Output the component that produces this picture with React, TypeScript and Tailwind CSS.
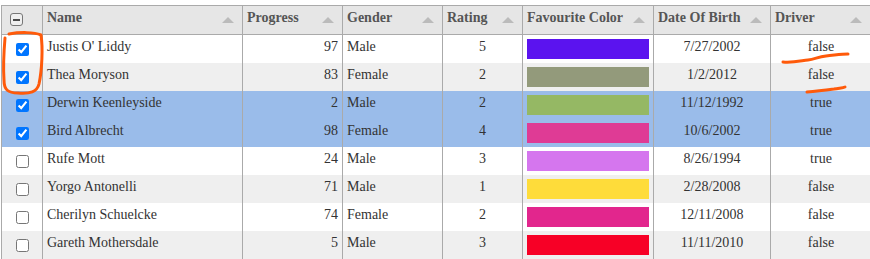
type Row = {
  name: string;
  progress: number;
  gender: string;
  rating: number;
  color: string;
  dob: string;
  driver: boolean;
  selected?: boolean;
};

const rows: Row[] = [
  { name: "Justis O' Liddy", progress: 97, gender: "Male", rating: 5, color: "#5b13ef", dob: "7/27/2002", driver: false, selected: true },
  { name: "Thea Moryson", progress: 83, gender: "Female", rating: 2, color: "#939a7b", dob: "1/2/2012", driver: false, selected: true },
  { name: "Derwin Keenleyside", progress: 2, gender: "Male", rating: 2, color: "#95b864", dob: "11/12/1992", driver: true, selected: true },
  { name: "Bird Albrecht", progress: 98, gender: "Female", rating: 4, color: "#df3b95", dob: "10/6/2002", driver: true, selected: true },
  { name: "Rufe Mott", progress: 24, gender: "Male", rating: 3, color: "#d576ee", dob: "8/26/1994", driver: true },
  { name: "Yorgo Antonelli", progress: 71, gender: "Male", rating: 1, color: "#fedc3a", dob: "2/28/2008", driver: false },
  { name: "Cherilyn Schuelcke", progress: 74, gender: "Female", rating: 2, color: "#e2268d", dob: "12/11/2008", driver: false },
  { name: "Gareth Mothersdale", progress: 5, gender: "Male", rating: 3, color: "#f70026", dob: "11/11/2010", driver: false },
];

// rows 3 & 4 are the highlighted ones
const highlighted = [2, 3];

function SortArrow() {
  return (
    <span className="mt-[7px] mr-[8px] h-0 w-0 shrink-0 border-x-[6px] border-b-[6px] border-x-transparent border-b-[#bbbbbb]" />
  );
}

function HeaderCell({ title, className }: { title: string; className: string }) {
  return (
    <div className={`flex justify-between border-r border-[#aaaaaa] pl-[4px] pt-[4px] ${className}`}>
      <span className="font-bold leading-[16px] text-[#555555]">{title}</span>
      <SortArrow />
    </div>
  );
}

export default function App() {
  return (
    <div className="relative h-[259px] w-[870px] overflow-hidden bg-white pt-[5px] pl-px font-['Liberation_Serif',serif] text-[14px] text-[#333333]">
      <div className="w-[869px] border-t border-l border-[#aaaaaa]">
        {/* header */}
        <div className="flex h-[29px] border-b border-[#aaaaaa] bg-[#e6e6e6]">
          <div className="flex w-[41px] shrink-0 border-r border-[#aaaaaa] pl-[8px] pt-[7px]">
            <div className="flex h-[13px] w-[13px] items-center justify-center rounded-[3px] border border-[#767676] bg-[#efefef]">
              <div className="h-[2px] w-[7px] bg-[#4a4a4a]" />
            </div>
          </div>
          <HeaderCell title="Name" className="w-[200px] shrink-0" />
          <HeaderCell title="Progress" className="w-[100px] shrink-0" />
          <HeaderCell title="Gender" className="w-[100px] shrink-0" />
          <HeaderCell title="Rating" className="w-[80px] shrink-0" />
          <HeaderCell title="Favourite Color" className="w-[131px] shrink-0" />
          <HeaderCell title="Date Of Birth" className="w-[117px] shrink-0" />
          <HeaderCell title="Driver" className="w-[100px] shrink-0" />
        </div>

        {/* body */}
        {rows.map((r, i) => {
          const bg = highlighted.includes(i)
            ? "bg-[#9abcea]"
            : i % 2 === 1
              ? "bg-[#efefef]"
              : "bg-white";
          return (
            <div key={r.name} className={`flex h-[28px] leading-[16px] ${bg}`}>
              <div className="flex w-[41px] shrink-0 items-center justify-center border-r border-[#aaaaaa]">
                <input
                  type="checkbox"
                  checked={!!r.selected}
                  readOnly
                  className="m-0 h-[13px] w-[13px]"
                />
              </div>
              <div className="w-[200px] shrink-0 border-r border-[#aaaaaa] px-[4px] pt-[4px]">{r.name}</div>
              <div className="w-[100px] shrink-0 border-r border-[#aaaaaa] px-[4px] pt-[4px] text-right">{r.progress}</div>
              <div className="w-[100px] shrink-0 border-r border-[#aaaaaa] px-[4px] pt-[4px]">{r.gender}</div>
              <div className="w-[80px] shrink-0 border-r border-[#aaaaaa] px-[4px] pt-[4px] text-center">{r.rating}</div>
              <div className="w-[131px] shrink-0 border-r border-[#aaaaaa] px-[4px] py-[4px]">
                <div className="h-[20px] w-[122px]" style={{ backgroundColor: r.color }} />
              </div>
              <div className="w-[117px] shrink-0 border-r border-[#aaaaaa] px-[4px] pt-[4px] text-center">{r.dob}</div>
              <div className="w-[100px] shrink-0 px-[4px] pt-[4px] text-center">{r.driver ? "true" : "false"}</div>
            </div>
          );
        })}
      </div>

      {/* hand-drawn marker annotations */}
      <svg
        className="pointer-events-none absolute top-0 left-0"
        width="870"
        height="259"
        viewBox="0 0 870 259"
        fill="none"
        stroke="#ff5a0a"
        strokeWidth="3"
        strokeLinecap="round"
        strokeLinejoin="round"
      >
        <path d="M9 34 C 20 32, 34 32, 41 35 C 43 48, 42 70, 39 84 C 37 92, 30 94, 18 93 C 8 93, 4 90, 4 80 C 3 66, 4 50, 5 38" />
        <path d="M783 62 C 792 63, 800 61, 808 60 C 815 59, 818 57, 826 56 C 836 55, 842 54, 848 54" />
        <path d="M807 92 C 818 91, 826 90, 834 89 C 839 88, 843 88, 845 87" />
      </svg>
    </div>
  );
}
